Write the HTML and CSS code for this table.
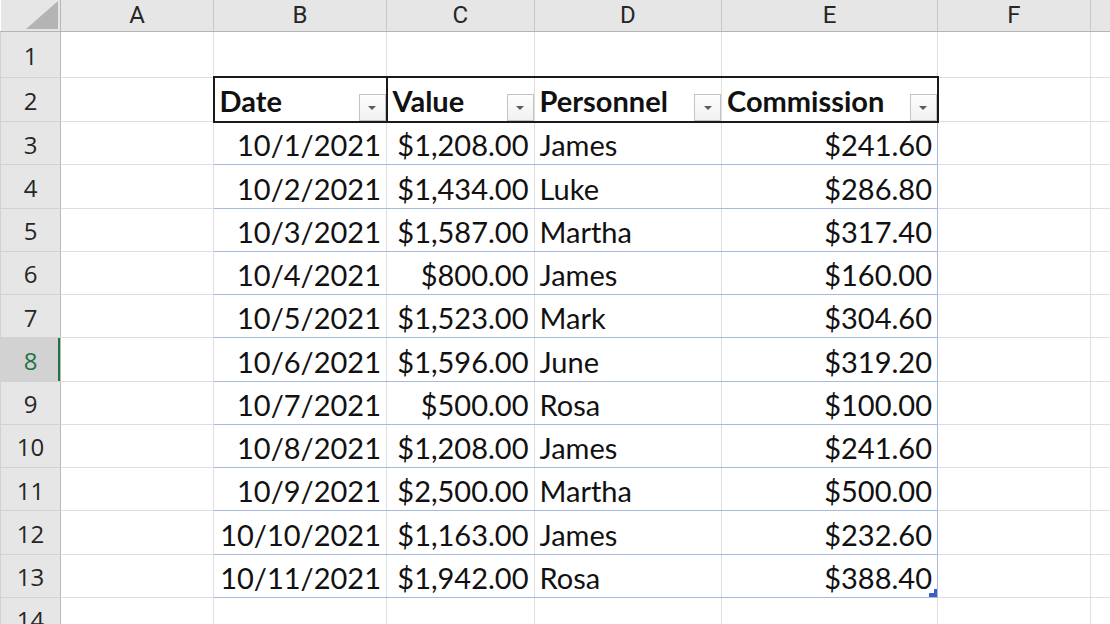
FILE: index.html
```html
<!DOCTYPE html>
<html lang="en">
<head>
    <meta charset="UTF-8">
    <meta name="viewport" content="width=device-width, initial-scale=1.0">
    <title>Commission - Excel</title>
    <link rel="stylesheet" href="styles.css">
</head>
<body>
    <table class="sheet">
        <colgroup>
            <col class="w-rh"><col class="w-a"><col class="w-b"><col class="w-c">
            <col class="w-d"><col class="w-e"><col class="w-f"><col class="w-g">
        </colgroup>
        <thead>
            <tr class="letters">
                <th class="corner">
                    <svg width="60" height="31" viewBox="0 0 60 31"><polygon points="25,29 57,29 57,1" fill="#b4b4b4"/></svg>
                </th>
                <th>A</th><th>B</th><th>C</th><th>D</th><th>E</th><th>F</th><th></th>
            </tr>
        </thead>
        <tbody>
            <tr class="r-top"><th>1</th><td></td><td></td><td></td><td></td><td></td><td></td><td></td></tr>
            <tr class="r-head">
                <th>2</th><td></td>
                <td class="tb-head first"><div class="hd"><span>Date</span><i class="filter"></i></div></td>
                <td class="tb-head"><div class="hd"><span>Value</span><i class="filter"></i></div></td>
                <td class="tb-head"><div class="hd"><span>Personnel</span><i class="filter"></i></div></td>
                <td class="tb-head last"><div class="hd"><span>Commission</span><i class="filter"></i></div></td>
                <td></td><td></td>
            </tr>
            <tr><th>3</th><td></td><td class="tb num">10/1/2021</td><td class="tb num">$1,208.00</td><td class="tb">James</td><td class="tb num end">$241.60</td><td class="after"></td><td></td></tr>
            <tr><th>4</th><td></td><td class="tb num">10/2/2021</td><td class="tb num">$1,434.00</td><td class="tb">Luke</td><td class="tb num end">$286.80</td><td class="after"></td><td></td></tr>
            <tr><th>5</th><td></td><td class="tb num">10/3/2021</td><td class="tb num">$1,587.00</td><td class="tb">Martha</td><td class="tb num end">$317.40</td><td class="after"></td><td></td></tr>
            <tr><th>6</th><td></td><td class="tb num">10/4/2021</td><td class="tb num">$800.00</td><td class="tb">James</td><td class="tb num end">$160.00</td><td class="after"></td><td></td></tr>
            <tr><th>7</th><td></td><td class="tb num">10/5/2021</td><td class="tb num">$1,523.00</td><td class="tb">Mark</td><td class="tb num end">$304.60</td><td class="after"></td><td></td></tr>
            <tr><th class="sel">8</th><td></td><td class="tb num">10/6/2021</td><td class="tb num">$1,596.00</td><td class="tb">June</td><td class="tb num end">$319.20</td><td class="after"></td><td></td></tr>
            <tr><th>9</th><td></td><td class="tb num">10/7/2021</td><td class="tb num">$500.00</td><td class="tb">Rosa</td><td class="tb num end">$100.00</td><td class="after"></td><td></td></tr>
            <tr><th>10</th><td></td><td class="tb num">10/8/2021</td><td class="tb num">$1,208.00</td><td class="tb">James</td><td class="tb num end">$241.60</td><td class="after"></td><td></td></tr>
            <tr><th>11</th><td></td><td class="tb num">10/9/2021</td><td class="tb num">$2,500.00</td><td class="tb">Martha</td><td class="tb num end">$500.00</td><td class="after"></td><td></td></tr>
            <tr><th>12</th><td></td><td class="tb num">10/10/2021</td><td class="tb num">$1,163.00</td><td class="tb">James</td><td class="tb num end">$232.60</td><td class="after"></td><td></td></tr>
            <tr><th>13</th><td></td><td class="tb num">10/11/2021</td><td class="tb num">$1,942.00</td><td class="tb">Rosa</td><td class="tb num end corner-cell">$388.40<svg class="handle" width="9" height="9" viewBox="0 0 9 9"><polygon points="9,0 9,9 0,9 0,4 5,4 5,0" fill="#3d5fc4"/></svg></td><td class="after"></td><td></td></tr>
            <tr><th>14</th><td></td><td class="below"></td><td class="below"></td><td class="below"></td><td class="below"></td><td></td><td></td></tr>
        </tbody>
    </table>
</body>
</html>
```

FILE: styles.css
```css
body {
    margin: 0;
    background: #fff;
    overflow: hidden;
    font-family: "Lato", "Liberation Sans", sans-serif;
    color: #111;
}
.sheet {
    border-collapse: collapse;
    table-layout: fixed;
    width: 1151px;
}
.w-rh { width: 60px; }
.w-a { width: 153px; }
.w-b { width: 173px; }
.w-c { width: 147.5px; }
.w-d { width: 187.5px; }
.w-e { width: 216px; }
.w-f { width: 153px; }
.w-g { width: 61px; }

.sheet th {
    background: #e6e6e6;
    font-family: "Open Sans", "Noto Sans", sans-serif;
    font-weight: 400;
    font-size: 24px;
    color: #262626;
    border: 1px solid #d2d2d2;
    border-right-color: #b8b8b8;
    padding: 3px 0 0;
    line-height: 30px;
}
.letters th {
    font-family: "Roboto", "Open Sans", sans-serif;
    vertical-align: top;
    padding: 2.6px 0 0;
    line-height: 24px;
    border-top: none;
    border-right-color: #c8c8c8;
    border-bottom-color: #b5b5b5;
}
.letters .corner {
    border-left: none;
    padding: 0;
    vertical-align: bottom;
    border-right-color: #b8b8b8;
}
.corner svg { display: block; }
tbody th { border-left: none; }
.sheet th.sel {
    background: #d2d2d2;
    color: #217346;
    box-shadow: inset -2px 0 0 #217346;
}

.sheet td {
    border: 1px solid #dedede;
    padding: 0 5px 5px;
    vertical-align: bottom;
    font-size: 29px;
    line-height: 28px;
    white-space: nowrap;
    overflow: hidden;
}
.sheet tr { height: 43.25px; }
.sheet tr.letters { height: 31.5px; }
.sheet tr.r-top { height: 45.5px; }
.sheet tr.r-head { height: 44.5px; }

.sheet td.tb {
    border-top-color: #a6bade;
    border-bottom-color: #a6bade;
}
.sheet td.end { border-right-color: #a6bade; }
.sheet td.after { border-left-color: #a6bade; }
.sheet td.below { border-top-color: #a6bade; }
.num { text-align: right; }

.sheet td.tb-head {
    border-top: 2px solid #1a1a1a;
    border-bottom: 2px solid #1a1a1a;
    padding: 0 0 0 5px;
    font-weight: 700;
}
.sheet td.first { border-left: 2px solid #1a1a1a; border-right: 2px solid #1a1a1a; }
.sheet td.last { border-right: 2px solid #1a1a1a; }
.hd {
    display: flex;
    justify-content: space-between;
    align-items: flex-end;
}
.hd span { margin-bottom: 6px; }
.filter {
    width: 27px;
    height: 27px;
    box-sizing: border-box;
    border: 1px solid #c4c4c4;
    background: linear-gradient(#fdfdfd, #f1f1f1);
    display: flex;
    justify-content: center;
    align-items: center;
}
.filter::after {
    content: "";
    border-left: 4px solid transparent;
    border-right: 4px solid transparent;
    border-top: 4px solid #5a5a5a;
    margin-top: 1px;
}

.corner-cell { position: relative; overflow: visible; }
.handle {
    position: absolute;
    right: -1px;
    bottom: -1px;
}
```
